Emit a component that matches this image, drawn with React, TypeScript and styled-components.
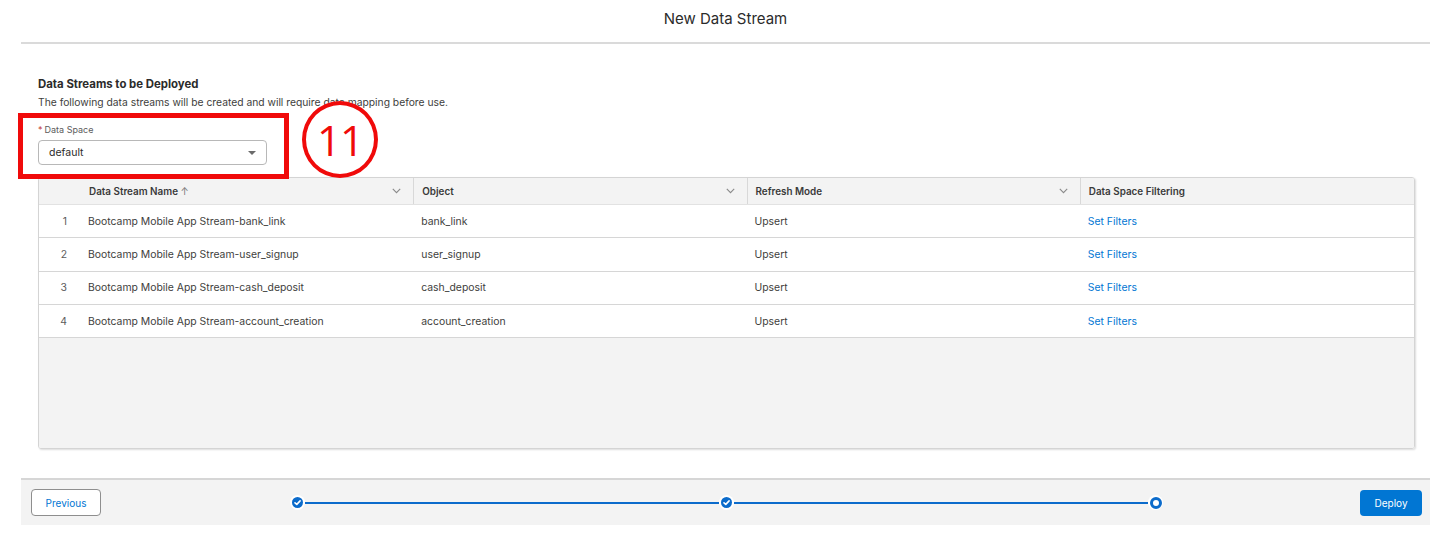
import { FC } from "react";
import styled, { createGlobalStyle } from "styled-components";

const colors = {
  text: "#3e3e3c",
  muted: "#5c5c5c",
  border: "#d4d4d4",
  panel: "#f3f3f3",
  blue: "#0176d3",
  line: "#0b6bcb",
  red: "#f00a0a",
};

const GlobalStyle = createGlobalStyle`
  html, body {
    margin: 0;
    padding: 0;
    background: #fff;
  }
  body {
    font-family: Inter, "Noto Sans", "Liberation Sans", sans-serif;
    color: ${colors.text};
  }
  * {
    box-sizing: border-box;
  }
`;

type Stream = {
  name: string;
  object: string;
  mode: string;
};

const streams: Stream[] = [
  { name: "Bootcamp Mobile App Stream-bank_link", object: "bank_link", mode: "Upsert" },
  { name: "Bootcamp Mobile App Stream-user_signup", object: "user_signup", mode: "Upsert" },
  { name: "Bootcamp Mobile App Stream-cash_deposit", object: "cash_deposit", mode: "Upsert" },
  { name: "Bootcamp Mobile App Stream-account_creation", object: "account_creation", mode: "Upsert" },
];

const Chevron: FC = () => (
  <svg width="9" height="6" viewBox="0 0 9 6">
    <path d="M0.8 0.8 L4.5 4.6 L8.2 0.8" fill="none" stroke="#8a8a8a" strokeWidth="1.1" />
  </svg>
);

const CheckDot: FC = () => (
  <svg width="11" height="11" viewBox="0 0 11 11">
    <circle cx="5.5" cy="5.5" r="5.5" fill={colors.line} />
    <path d="M3 5.8 L4.8 7.4 L8.1 3.9" fill="none" stroke="#fff" strokeWidth="1.6" strokeLinecap="round" strokeLinejoin="round" />
  </svg>
);

const App: FC = () => {
  return (
    <Page>
      <GlobalStyle />
      <Modal>
        <Header>
          <Title>New Data Stream</Title>
        </Header>

        <Content>
          <SectionTitle>Data Streams to be Deployed</SectionTitle>
          <SectionText>
            The following data streams will be created and will require data mapping before use.
          </SectionText>

          <FieldLabel>
            <Required>*</Required>Data Space
          </FieldLabel>
          <Select>
            <span>default</span>
            <SelectArrow />
          </Select>

          <Table>
            <HeadRow>
              <HeadCell />
              <HeadCell divided>
                <span>Data Stream Name <SortArrow>↑</SortArrow></span>
                <Chevron />
              </HeadCell>
              <HeadCell divided>
                <span>Object</span>
                <Chevron />
              </HeadCell>
              <HeadCell divided>
                <span>Refresh Mode</span>
                <Chevron />
              </HeadCell>
              <HeadCell>
                <span>Data Space Filtering</span>
              </HeadCell>
            </HeadRow>

            {streams.map((s, i) => (
              <Row key={s.name}>
                <NumCell>{i + 1}</NumCell>
                <Cell>{s.name}</Cell>
                <Cell>{s.object}</Cell>
                <Cell>{s.mode}</Cell>
                <Cell>
                  <Link>Set Filters</Link>
                </Cell>
              </Row>
            ))}

            <EmptyArea />
          </Table>
        </Content>

        <Footer>
          <FooterLeft>
            <OutlineButton>Previous</OutlineButton>
          </FooterLeft>
          <Progress>
            <Step>
              <CheckDot />
            </Step>
            <Track />
            <Step>
              <CheckDot />
            </Step>
            <Track />
            <Step>
              <CurrentDot />
            </Step>
          </Progress>
          <FooterRight>
            <BrandButton>Deploy</BrandButton>
          </FooterRight>
        </Footer>
      </Modal>

      <CalloutBox />
      <CalloutBadge>11</CalloutBadge>
    </Page>
  );
};

const Page = styled.div`
  position: relative;
  width: 1439px;
  height: 540px;
  background: #fff;
  overflow: hidden;
`;
const Modal = styled.div`
  margin: 0 9px 0 21px;
  display: flex;
  flex-direction: column;
`;
const Header = styled.div`
  height: 44px;
  padding-bottom: 5px;
  display: flex;
  align-items: center;
  justify-content: center;
  border-bottom: 2px solid #dadada;
`;
const Title = styled.h1`
  margin: 0;
  font-size: 15px;
  font-weight: 400;
  color: #2b2b2b;
`;
const Content = styled.div`
  padding: 33px 15px 0 17px;
  display: flex;
  flex-direction: column;
`;
const SectionTitle = styled.h2`
  margin: 0;
  font-size: 11.4px;
  line-height: 14px;
  font-weight: 700;
  color: #2b2b2b;
`;
const SectionText = styled.p`
  margin: 5px 0 0;
  font-size: 10.3px;
  line-height: 13px;
  color: ${colors.text};
`;
const FieldLabel = styled.label`
  margin: 15px 0 0;
  display: flex;
  align-items: center;
  gap: 2px;
  font-size: 9px;
  line-height: 12px;
  color: ${colors.muted};
`;
const Required = styled.span`
  color: #c23934;
`;
const Select = styled.div`
  margin: 4px 0 0;
  width: 229px;
  height: 25px;
  padding: 0 10px;
  display: flex;
  align-items: center;
  justify-content: space-between;
  border: 1px solid #b8b8b8;
  border-radius: 4px;
  font-size: 10.5px;
  color: #2b2b2b;
`;
const SelectArrow = styled.span`
  width: 0;
  height: 0;
  border-left: 4px solid transparent;
  border-right: 4px solid transparent;
  border-top: 4px solid #6b6b6b;
`;
const Table = styled.div`
  margin: 12px 0 0;
  height: 272px;
  display: flex;
  flex-direction: column;
  border: 1px solid ${colors.border};
  border-radius: 3px;
  box-shadow: 1px 1px 2px rgba(0, 0, 0, 0.14);
  overflow: hidden;
`;
const gridColumns = `
  display: grid;
  grid-template-columns: 42px repeat(4, 1fr);
`;
const HeadRow = styled.div`
  ${gridColumns}
  height: 27px;
  flex: none;
  background: ${colors.panel};
  border-bottom: 1px solid #e2e2e2;
`;
const HeadCell = styled.div<{ divided?: boolean }>`
  padding: 0 12px 0 8px;
  display: flex;
  align-items: center;
  justify-content: space-between;
  border-right: ${(p) => (p.divided ? "1px solid #d8d8d8" : "0")};
  font-size: 9.9px;
  font-weight: 600;
  color: #3a3a3a;
`;
const SortArrow = styled.span`
  font-weight: 400;
  color: #7a7a7a;
`;
const Row = styled.div`
  ${gridColumns}
  height: 33.3px;
  flex: none;
  border-bottom: 1px solid #d6d6d6;
  background: #fff;
`;
const Cell = styled.div`
  padding: 0 7px;
  display: flex;
  align-items: center;
  font-size: 10.4px;
  color: ${colors.text};
  white-space: nowrap;
`;
const NumCell = styled(Cell)`
  justify-content: flex-end;
  padding: 0 14px 0 0;
  color: #5c5c5c;
`;
const Link = styled.a`
  color: ${colors.blue};
  cursor: pointer;
`;
const EmptyArea = styled.div`
  flex: 1;
  background: ${colors.panel};
`;
const Footer = styled.div`
  margin: 29px 0 0;
  height: 47px;
  padding: 0 8px 0 10px;
  display: grid;
  grid-template-columns: 1fr auto 1fr;
  align-items: center;
  background: ${colors.panel};
  border-top: 2px solid #d6d6d6;
`;
const FooterLeft = styled.div`
  display: flex;
  justify-content: flex-start;
`;
const FooterRight = styled.div`
  display: flex;
  justify-content: flex-end;
`;
const OutlineButton = styled.button`
  width: 70px;
  height: 27px;
  border: 1px solid #8e8e8e;
  border-radius: 4px;
  background: #fff;
  font-family: inherit;
  font-size: 10px;
  color: ${colors.blue};
`;
const BrandButton = styled.button`
  width: 62px;
  height: 26px;
  border: 0;
  border-radius: 4px;
  background: ${colors.blue};
  font-family: inherit;
  font-size: 10px;
  color: #fff;
`;
const Progress = styled.div`
  width: 873px;
  display: flex;
  align-items: center;
`;
const Step = styled.div`
  width: 15px;
  height: 15px;
  flex: none;
  display: flex;
  align-items: center;
  justify-content: center;
  border-radius: 50%;
  background: #fff;
`;
const CurrentDot = styled.span`
  width: 12px;
  height: 12px;
  border-radius: 50%;
  border: 3px solid ${colors.line};
  background: #fff;
`;
const Track = styled.div`
  flex: 1;
  height: 2px;
  background: ${colors.line};
`;
const CalloutBox = styled.div`
  position: absolute;
  left: 18px;
  top: 113px;
  width: 271px;
  height: 66px;
  border: 5px solid ${colors.red};
  pointer-events: none;
`;
const CalloutBadge = styled.div`
  position: absolute;
  left: 302px;
  top: 101px;
  width: 76px;
  height: 77px;
  display: flex;
  align-items: center;
  justify-content: center;
  border: 4px solid ${colors.red};
  border-radius: 50%;
  background: #fff;
  font-family: "Open Sans", "Liberation Sans", sans-serif;
  font-size: 42px;
  font-weight: 500;
  letter-spacing: -1px;
  color: ${colors.red};
`;

export default App;
